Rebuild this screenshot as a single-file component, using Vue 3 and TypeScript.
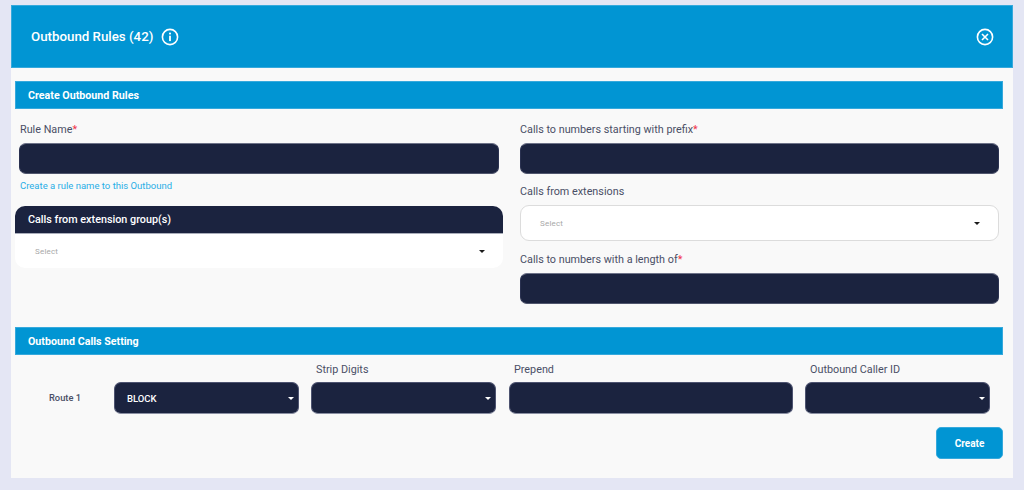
<script setup lang="ts">
const routeFields = [
  { label: '', kind: 'select', value: 'BLOCK', cls: 'f-action' },
  { label: 'Strip Digits', kind: 'select', value: '', cls: 'f-strip' },
  { label: 'Prepend', kind: 'input', value: '', cls: 'f-prepend' },
  { label: 'Outbound Caller ID', kind: 'select', value: '', cls: 'f-caller' },
]
</script>

<template>
  <div class="page">
    <div class="panel">
      <header class="head">
        <div class="head-title">
          <h1>Outbound Rules (42)</h1>
          <svg class="icon" viewBox="0 0 18 18" width="18" height="18" aria-hidden="true">
            <circle cx="9" cy="9" r="7.6" fill="none" stroke="#fff" stroke-width="1.6" />
            <circle cx="9" cy="5.6" r="1.05" fill="#fff" />
            <rect x="8.1" y="7.7" width="1.8" height="5.4" fill="#fff" />
          </svg>
        </div>
        <svg class="icon" viewBox="0 0 18 18" width="18" height="18" aria-hidden="true">
          <circle cx="9" cy="9" r="7.6" fill="none" stroke="#fff" stroke-width="1.6" />
          <path d="M6 6l6 6M12 6l-6 6" fill="none" stroke="#fff" stroke-width="1.6" />
        </svg>
      </header>

      <section class="body">
        <div class="bar">Create Outbound Rules</div>
        <div class="cols">
          <div class="col-left">
            <div class="pad">
              <label class="lbl indent">Rule Name<span class="req">*</span></label>
              <div class="dark-input"></div>
              <p class="help">Create a rule name to this Outbound</p>
            </div>
            <div class="group-card">
              <div class="group-head">Calls from extension group(s)</div>
              <div class="group-select">
                <span class="placeholder">Select</span>
                <span class="caret dark"></span>
              </div>
            </div>
          </div>
          <div class="col-right">
            <label class="lbl">Calls to numbers starting with prefix<span class="req">*</span></label>
            <div class="dark-input"></div>
            <label class="lbl second">Calls from extensions</label>
            <div class="white-select">
              <span class="placeholder">Select</span>
              <span class="caret dark"></span>
            </div>
            <label class="lbl third">Calls to numbers with a length of<span class="req">*</span></label>
            <div class="dark-input"></div>
          </div>
        </div>

        <div class="bar">Outbound Calls Setting</div>
        <div class="route">
          <div class="route-name">Route 1</div>
          <div v-for="f in routeFields" :key="f.cls" class="field" :class="f.cls">
            <label class="lbl small">{{ f.label }}</label>
            <div class="dark-box">
              <span class="val">{{ f.value }}</span>
              <span v-if="f.kind === 'select'" class="caret light"></span>
            </div>
          </div>
        </div>
        <div class="actions">
          <button class="create" type="button">Create</button>
        </div>
      </section>
    </div>
  </div>
</template>

<style>
html, body { margin: 0; background: #e4e6f4; }
</style>

<style scoped>
* { box-sizing: border-box; }
.page {
  width: 1024px;
  height: 490px;
  padding: 5px 11px 12px;
  background: #e4e6f4;
  font-family: Roboto, "Liberation Sans", sans-serif;
  overflow: hidden;
}
.panel { height: 473px; background: #f9f9f9; display: flex; flex-direction: column; }
.head {
  height: 63px;
  background: #0195d3;
  border: 1px solid #36a9dc;
  display: flex;
  align-items: center;
  justify-content: space-between;
  padding: 0 18px 0 19px;
  color: #fff;
}
.head-title { display: flex; align-items: center; gap: 8px; }
h1 { margin: 0; font-size: 13.3px; font-weight: 500; color: #fff; }
.icon { display: block; }
.body { padding: 13px 10px 0 4px; }
.bar {
  height: 28px;
  background: #0195d3;
  border: 1px solid #36a9dc;
  color: #fff;
  font-size: 10.7px;
  font-weight: 700;
  line-height: 28px;
  padding-left: 12px;
}
.cols { display: flex; height: 218px; }
.col-left { width: 488px; }
.pad { padding: 14px 4px 0; }
.col-right { width: 479px; margin-left: 17px; padding-top: 14px; }
.lbl {
  display: block;
  height: 14px;
  font-size: 10.8px;
  line-height: 14px;
  color: #4a4f66;
  margin-bottom: 6px;
}
.indent { padding-left: 1px; }
.req { color: #f0344a; }
.second { margin-top: 11px; margin-bottom: 6px; }
.third { margin-top: 12px; margin-bottom: 6px; }
.dark-input {
  height: 31px;
  background: #1b233f;
  border: 1px solid #8a8fa3;
  border-color: #6d7288 #2a3150 #50566e;
  border-radius: 7px;
}
.help {
  margin: 5px 0 0 1px;
  font-size: 9.5px;
  line-height: 13px;
  color: #29aee6;
}
.group-card { margin-top: 14px; height: 62px; background: #fff; border-radius: 10px; overflow: hidden; }
.group-head {
  height: 28px;
  background: #1b233f;
  color: #fff;
  font-size: 10.8px;
  font-weight: 500;
  line-height: 27px;
  padding-left: 13px;
  border-bottom: 1px solid #a9adba;
}
.group-select {
  height: 34px;
  display: flex;
  align-items: center;
  justify-content: space-between;
  padding: 0 18px 0 20px;
}
.placeholder { font-size: 8px; color: #a8a8a8; letter-spacing: 0.2px; }
.white-select {
  height: 36px;
  background: #fff;
  border: 1px solid #dcdcdc;
  border-radius: 9px;
  display: flex;
  align-items: center;
  justify-content: space-between;
  padding: 0 18px 0 19px;
}
.caret { width: 0; height: 0; border-left: 3px solid transparent; border-right: 3px solid transparent; }
.caret.dark { border-top: 3px solid #1b1b1b; }
.caret.light { border-top: 3px solid #fff; border-left-width: 3.5px; border-right-width: 3.5px; }
.route { display: flex; padding-top: 8px; }
.route-name {
  width: 99px;
  padding: 28px 0 0 34px;
  font-size: 9.3px;
  font-weight: 500;
  line-height: 14px;
  color: #4a4f66;
  align-self: flex-start;
}
.field { flex: none; margin-right: 12px; }
.f-action, .f-strip { width: 185px; }
.f-strip { margin-right: 13px; }
.f-prepend { width: 284px; }
.f-caller { width: 185px; margin-right: 0; }
.small { margin-bottom: 5px; text-indent: 5px; }
.dark-box {
  height: 32px;
  background: #1b233f;
  border: 1px solid #7f8499;
  border-color: #4d5370 #4d5370 #8a8fa3;
  border-radius: 7px;
  display: flex;
  align-items: center;
  justify-content: space-between;
  padding: 0 4px 0 12px;
  color: #fff;
}
.val { font-size: 9.5px; font-weight: 500; }
.actions { display: flex; justify-content: flex-end; margin-top: 13px; }
.create {
  width: 67px;
  height: 32px;
  background: #0195d3;
  border: 1px solid #36a9dc;
  border-radius: 5px;
  color: #fff;
  font-family: inherit;
  font-size: 10px;
  font-weight: 700;
  padding: 0;
}
</style>
